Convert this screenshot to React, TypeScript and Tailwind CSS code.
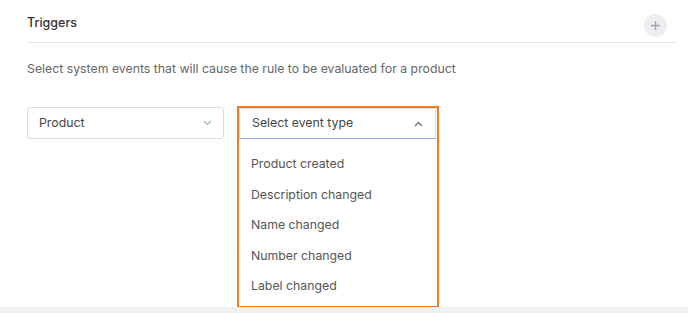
import React from "react";

const items = [
  "Product created",
  "Description changed",
  "Name changed",
  "Number changed",
  "Label changed",
];

function ChevronDown() {
  return (
    <svg width="9" height="6" viewBox="0 0 9 6" fill="none">
      <path d="M1 1l3.5 3.5L8 1" stroke="#a9adb3" strokeWidth="1.1" />
    </svg>
  );
}

function ChevronUp() {
  return (
    <svg width="9" height="6" viewBox="0 0 9 6" fill="none">
      <path d="M1 5l3.5-3.5L8 5" stroke="#6b6f75" strokeWidth="1.3" />
    </svg>
  );
}

export default function App() {
  return (
    <div
      className="w-[688px] h-[313px] bg-white flex flex-col overflow-hidden"
      style={{ fontFamily: "Inter, 'Noto Sans', sans-serif" }}
    >
      <div className="h-[307px] pl-[27px] pr-[11px] flex flex-col">
        <div className="flex items-start justify-between pt-[14px] pb-[5px] border-b border-[#e6e6e6]">
          <div className="text-[12.5px] leading-[16px] mt-[1px] font-medium text-[#333]">Triggers</div>
          <div className="w-[23px] h-[23px] rounded-full bg-[#eceef1] flex items-center justify-center mr-[10px]">
            <svg width="11" height="11" viewBox="0 0 11 11" fill="none">
              <path d="M5.5 1v9M1 5.5h9" stroke="#a3a7ad" strokeWidth="1.4" />
            </svg>
          </div>
        </div>
        <div className="mt-[18px] text-[12.3px] leading-[16px] text-[#666]">
          Select system events that will cause the rule to be evaluated for a product
        </div>
        <div className="mt-[29px] flex items-start">
          <div className="mt-[1px] w-[197px] h-[32px] border border-[#dcdcdc] rounded-[3px] flex items-center justify-between pl-[11px] pr-[11px]">
            <span className="text-[12.3px] text-[#444]">Product</span>
            <ChevronDown />
          </div>
          <div className="ml-[13px] w-[202px] h-[202px] border-2 border-[#f47a1f] flex flex-col">
            <div className="w-[197px] h-[31px] border border-[#dcdcdc] border-b-[#8ea9d8] flex items-center justify-between pl-[12px] pr-[12px]">
              <span className="text-[12.3px] text-[#444]">Select event type</span>
              <ChevronUp />
            </div>
            <div className="flex flex-col pt-[10px] pl-[12px]">
              {items.map((t) => (
                <div key={t} className="h-[30.5px] flex items-center text-[12.3px] text-[#555]">
                  {t}
                </div>
              ))}
            </div>
          </div>
        </div>
      </div>
      <div className="flex-1 bg-[#f0f0f0]" />
    </div>
  );
}
